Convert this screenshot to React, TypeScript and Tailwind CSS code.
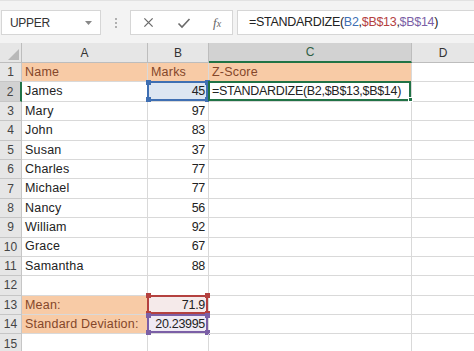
import React from "react";

const ROW_H = "h-[19.4px]";
const GRID = "border-[#d9d9d9]";

type Row = { name?: string; val?: string };

const data: Row[] = [
  { name: "Name", val: "Marks" },
  { name: "James", val: "45" },
  { name: "Mary", val: "97" },
  { name: "John", val: "83" },
  { name: "Susan", val: "37" },
  { name: "Charles", val: "77" },
  { name: "Michael", val: "77" },
  { name: "Nancy", val: "56" },
  { name: "William", val: "92" },
  { name: "Grace", val: "67" },
  { name: "Samantha", val: "88" },
  {},
  { name: "Mean:", val: "71.9" },
  { name: "Standard Deviation:", val: "20.23995" },
  {},
];

function Handle({ pos, color }: { pos: string; color: string }) {
  return <div className={`absolute w-[5px] h-[5px] ${pos} ${color}`} />;
}

function SelBox({ border, handle }: { border: string; handle: string }) {
  return (
    <div className={`absolute -left-[1px] -top-[1px] right-0 bottom-0 border-2 ${border} pointer-events-none`}>
      <Handle pos="-left-[3.5px] -top-[3.5px]" color={handle} />
      <Handle pos="-right-[3.5px] -top-[3.5px]" color={handle} />
      <Handle pos="-left-[3.5px] -bottom-[3.5px]" color={handle} />
      <Handle pos="-right-[3.5px] -bottom-[3.5px]" color={handle} />
    </div>
  );
}

export default function App() {
  return (
    <div
      className="w-[474px] h-[351px] overflow-hidden bg-white text-[#222]"
      style={{ fontFamily: "'Liberation Sans', Arial, sans-serif" }}
    >
      {/* Formula bar */}
      <div className="h-[43px] bg-[#f3f3f3] border-t border-[#e2e2e2] flex items-start pt-[9px] pl-[1px]">
        <div className="w-[100px] h-[25px] bg-white border border-[#d6d6d6] flex items-center pl-[8px] pr-[8px] text-[12px] tracking-[-0.3px] text-[#333]">
          <span className="flex-1">UPPER</span>
          <svg width="7" height="4" viewBox="0 0 7 4">
            <path d="M0 0 L7 0 L3.5 4 Z" fill="#888" />
          </svg>
        </div>
        <div className="w-[29px] h-[25px] flex flex-col items-center justify-center gap-[2px]">
          <div className="w-[2px] h-[2px] bg-[#b0b0b0]" />
          <div className="w-[2px] h-[2px] bg-[#b0b0b0]" />
          <div className="w-[2px] h-[2px] bg-[#b0b0b0]" />
        </div>
        <div className="w-[103px] h-[25px] bg-white border border-[#d6d6d6] flex items-center">
          <div className="w-[36px] flex justify-center">
            <svg width="11" height="11" viewBox="0 0 12 12">
              <path d="M1.5 1.5 L10.5 10.5 M10.5 1.5 L1.5 10.5" stroke="#6a6a6a" strokeWidth="1.4" />
            </svg>
          </div>
          <div className="w-[36px] flex justify-center">
            <svg width="14" height="12" viewBox="0 0 14 12">
              <path d="M1.5 6.5 L5 10 L12.5 2" stroke="#6a6a6a" strokeWidth="1.6" fill="none" />
            </svg>
          </div>
          <div className="w-[30px] flex justify-center">
            <span className="text-[13px] italic text-[#666]" style={{ fontFamily: "'Liberation Serif', serif" }}>
              f<span className="text-[10px]">x</span>
            </span>
          </div>
        </div>
        <div className="w-[4px]" />
        <div className="flex-1 h-[25px] bg-white border border-[#d6d6d6] border-r-0 flex items-center pl-[11px] text-[12.5px] tracking-[-0.3px] text-[#222]">
          <span>=STANDARDIZE(</span>
          <span className="text-[#3f6fb3]">B2</span>
          <span>,</span>
          <span className="text-[#b4413f]">$B$13</span>
          <span>,</span>
          <span className="text-[#7b5fa6]">$B$14</span>
          <span>)</span>
        </div>
      </div>

      {/* Column headers */}
      <div className="flex h-[20px] bg-[#e6e6e6] text-[12px] text-[#333]">
        <div className="w-[22px] border-r border-b border-[#bdbdbd] relative">
          <svg className="absolute right-[2px] bottom-[2px]" width="11" height="11" viewBox="0 0 11 11">
            <path d="M11 0 L11 11 L0 11 Z" fill="#b8b8b8" />
          </svg>
        </div>
        <div className="w-[126px] border-r border-b border-[#bdbdbd] flex items-center justify-center">A</div>
        <div className="w-[61px] border-r border-b border-[#bdbdbd] flex items-center justify-center">B</div>
        <div className="w-[203px] bg-[#d2d2d2] border-r border-[#bdbdbd] border-b-2 border-b-[#217346] flex items-center justify-center text-[#2f5f44]">C</div>
        <div className="flex-1 border-b border-[#bdbdbd] flex items-center justify-center">D</div>
      </div>

      {/* Rows */}
      {data.map((r, i) => {
        const n = i + 1;
        const isHeader = n === 1;
        const isStat = n === 13 || n === 14;
        const aFill = isHeader || isStat ? "bg-[#f8cba6] text-[#84472a]" : "";
        let bFill = isHeader ? "bg-[#f8cba6] text-[#84472a]" : "";
        if (n === 2) bFill = "bg-[#dde6f2]";
        if (n === 13) bFill = "bg-[#f5eaea]";
        if (n === 14) bFill = "bg-[#efeaf4]";
        const cFill = isHeader ? "bg-[#f8cba6] text-[#84472a]" : "";
        return (
          <div key={n} className={`flex ${ROW_H} text-[12.5px] leading-none`}>
            <div
              className={`w-[22px] flex items-center justify-center text-[12px] text-[#444] border-r border-b border-[#c6c6c6] ${
                n === 2 ? "bg-[#d2d2d2] border-r-2 border-r-[#217346] text-[#2f5f44]" : "bg-[#e6e6e6]"
              }`}
            >
              {n}
            </div>
            <div className={`w-[126px] flex items-center px-[3px] border-r border-b ${GRID} ${aFill}`}>
              <span className="whitespace-nowrap tracking-[0.2px]">{r.name}</span>
            </div>
            <div
              className={`w-[61px] relative flex items-center px-[3px] border-r border-b ${GRID} ${bFill} ${
                isHeader ? "justify-start" : "justify-end"
              }`}
            >
              <span className={`whitespace-nowrap ${isHeader ? "tracking-[0.2px]" : "tracking-[-0.3px]"}`}>{r.val}</span>
              {n === 2 && <SelBox border="border-[#3f6fb3]" handle="bg-[#3f6fb3]" />}
              {n === 13 && <SelBox border="border-[#b4413f]" handle="bg-[#b4413f]" />}
              {n === 14 && <SelBox border="border-[#7b5fa6]" handle="bg-[#7b5fa6]" />}
            </div>
            <div className={`w-[203px] relative flex items-center px-[3px] border-r border-b ${GRID} ${cFill}`}>
              {n === 1 && <span className="tracking-[0.2px]">Z-Score</span>}
              {n === 2 && (
                <>
                  <span className="whitespace-nowrap tracking-[-0.3px]">=STANDARDIZE(B2,$B$13,$B$14)</span>
                  <div className="absolute -left-[1px] -top-[1px] right-0 bottom-0 border-2 border-[#217346]">
                    <div className="absolute -right-[3.5px] -bottom-[3.5px] w-[5px] h-[5px] bg-[#217346] border border-white" />
                  </div>
                </>
              )}
            </div>
            <div className={`flex-1 border-b ${GRID}`} />
          </div>
        );
      })}
    </div>
  );
}
